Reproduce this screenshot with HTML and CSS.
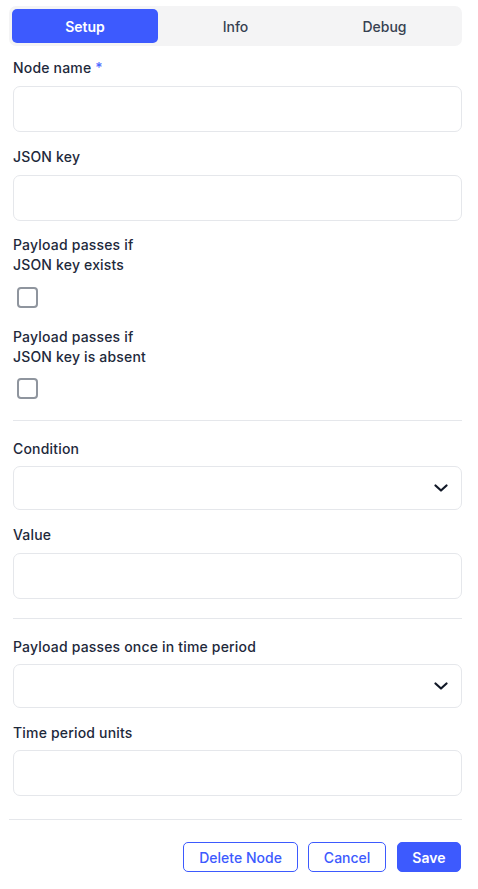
FILE: index.html
```html
<!DOCTYPE html>
<html>
<head>
<meta charset="utf-8">
<link rel="stylesheet" href="styles.css">
</head>
<body>
<div class="panel">
  <div class="tabs">
    <div class="tab active">Setup</div>
    <div class="tab">Info</div>
    <div class="tab">Debug</div>
  </div>

  <div class="field first">
    <label class="label">Node name <span class="req">*</span></label>
    <div class="input"></div>
  </div>

  <div class="field">
    <label class="label">JSON key</label>
    <div class="input"></div>
  </div>

  <div class="check-field cf1">
    <label class="label">Payload passes if<br>JSON key exists</label>
    <div class="checkbox"></div>
  </div>

  <div class="check-field cf2">
    <label class="label">Payload passes if<br>JSON key is absent</label>
    <div class="checkbox"></div>
  </div>

  <div class="divider d1"></div>

  <div class="field after-div">
    <label class="label">Condition</label>
    <div class="select">
      <svg class="chev" width="14" height="8" viewBox="0 0 14 8"><path d="M1.5 1.5 L7 6.5 L12.5 1.5" fill="none" stroke="#111827" stroke-width="2.2" stroke-linecap="round" stroke-linejoin="round"/></svg>
    </div>
  </div>

  <div class="field">
    <label class="label">Value</label>
    <div class="input"></div>
  </div>

  <div class="divider d2"></div>

  <div class="field after-div">
    <label class="label">Payload passes once in time period</label>
    <div class="select">
      <svg class="chev" width="14" height="8" viewBox="0 0 14 8"><path d="M1.5 1.5 L7 6.5 L12.5 1.5" fill="none" stroke="#111827" stroke-width="2.2" stroke-linecap="round" stroke-linejoin="round"/></svg>
    </div>
  </div>

  <div class="field after-select">
    <label class="label">Time period units</label>
    <div class="input"></div>
  </div>

  <div class="divider wide d3"></div>

  <div class="actions">
    <button class="btn outline del">Delete Node</button>
    <button class="btn outline cancel">Cancel</button>
    <button class="btn primary">Save</button>
  </div>
</div>
</body>
</html>
```

FILE: styles.css
```css
* { box-sizing: border-box; }
html, body { margin: 0; padding: 0; background: #ffffff; }
body {
  font-family: Inter, "Noto Sans", "Liberation Sans", sans-serif;
  color: #1e293b;
}
.panel {
  padding: 6px 16px 0 13px;
  display: flex;
  flex-direction: column;
}
.tabs {
  margin-left: -4px;
  height: 40px;
  background: #f4f4f5;
  border-radius: 7px;
  padding: 3px;
  display: grid;
  grid-template-columns: 1fr 1fr 1fr;
}
.tab {
  display: flex;
  align-items: center;
  justify-content: center;
  font-size: 14px;
  font-weight: 500;
  color: #374151;
  border-radius: 5px;
}
.tab.active {
  background: #3d5afe;
  color: #ffffff;
  font-weight: 600;
  margin-right: 3px;
}
.label {
  display: block;
  font-size: 14px;
  line-height: 20px;
  font-weight: 500;
  letter-spacing: 0.18px;
  color: #1e293b;
}
.req { color: #4f6bff; }
.field { display: flex; flex-direction: column; margin-top: 15px; }
.field.first { margin-top: 12px; }
.field.after-div { margin-top: 18px; }
.field.after-select { margin-top: 15px; }
.input, .select {
  margin-top: 8px;
  height: 46px;
  border: 1px solid #e5e7eb;
  border-radius: 7px;
  background: #fff;
}
.after-select .input { margin-top: 7px; }
.select {
  height: 44px;
  display: flex;
  align-items: center;
  justify-content: flex-end;
  padding-right: 13px;
  margin-top: 7px;
}
.check-field { display: flex; flex-direction: column; margin-top: 14px; }
.check-field.cf2 { margin-top: 19px; }
.checkbox {
  margin-top: 12px;
  margin-left: 4px;
  width: 21px;
  height: 21px;
  border: 2px solid #8f959e;
  border-radius: 4px;
  background: #fff;
}
.cf2 .checkbox { margin-top: 11px; }
.divider {
  height: 1px;
  background: #e5e7eb;
  margin-top: 21px;
}
.d2 { margin-top: 19px; }
.d3 { margin-top: 23px; margin-left: -4px; }
.actions {
  margin-top: 22px;
  display: flex;
  justify-content: flex-end;
  gap: 10px;
  padding-right: 1px;
}
.btn {
  height: 30px;
  font-family: Inter, "Noto Sans", "Liberation Sans", sans-serif;
  font-size: 14px;
  font-weight: 500;
  border-radius: 5px;
  padding: 0 14px;
  cursor: pointer;
}
.btn.outline {
  background: #fff;
  border: 1px solid #3d5afe;
  color: #3d5afe;
}
.btn.del { padding: 0 15.5px; }
.btn.cancel { padding: 0 14.5px; }
.btn.primary {
  background: #3d5afe;
  border: 1px solid #3d5afe;
  color: #fff;
  font-weight: 600;
  padding: 0 14.5px;
  margin-left: 1px;
}
```
